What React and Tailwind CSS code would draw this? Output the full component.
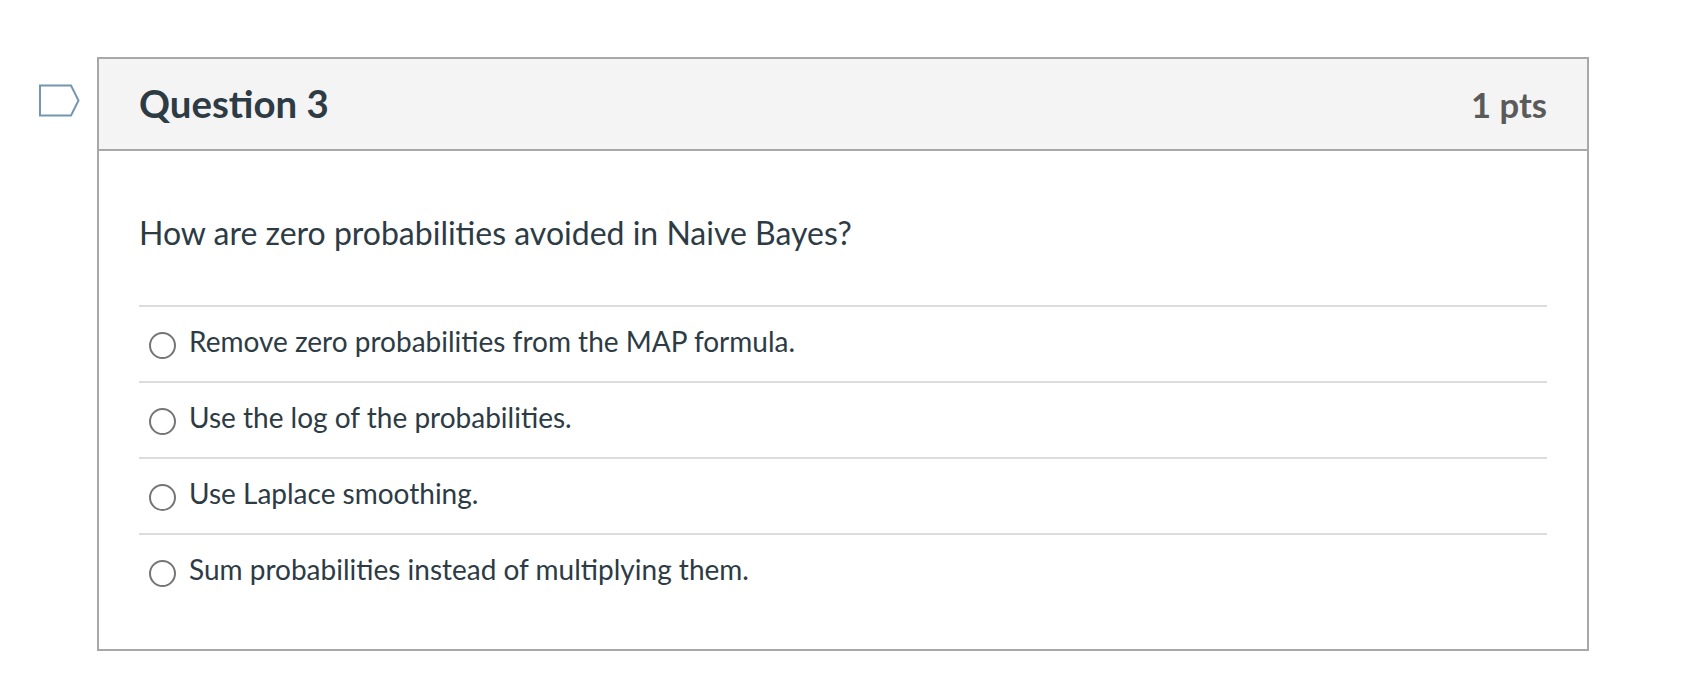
import React from 'react';

const answers = [
  'Remove zero probabilities from the MAP formula.',
  'Use the log of the probabilities.',
  'Use Laplace smoothing.',
  'Sum probabilities instead of multiplying them.',
];

export default function App() {
  return (
    <div className="h-[695px] bg-white pt-[57px] pl-[39px] flex items-start font-['Lato',sans-serif] text-[#2d3b45] overflow-hidden">
      <svg className="mt-[27px] mr-[17px] shrink-0" width="41" height="33" viewBox="0 0 41 33" fill="none">
        <path d="M1 1.5 H32 L39.5 16.5 L32 31.5 H1 Z" stroke="#7596b0" strokeWidth="2" />
      </svg>

      <div className="w-[1492px] h-[594px] border-2 border-[#a8a8a8]">
        <div className="h-[92px] bg-[#f4f4f4] border-b-2 border-[#a8a8a8] px-[40px] flex items-center justify-between">
          <h2 className="text-[38.4px] font-bold">Question 3</h2>
          <span className="text-[34.6px] font-bold text-[#5a5a5a] mt-[1px]">1 pts</span>
        </div>

        <div className="px-[40px] pt-[64px]">
          <p className="text-[32px] leading-[36px] mb-[54px]">How are zero probabilities avoided in Naive Bayes?</p>
          {answers.map((answer) => (
            <div key={answer} className="h-[76px] border-t-2 border-[#dcdcdc] flex items-center">
              <span className="w-[27px] h-[27px] ml-[10px] mr-[13px] mt-[2px] rounded-full border-2 border-[#757575] shrink-0" />
              <span className="text-[28px] mb-[6px]">{answer}</span>
            </div>
          ))}
        </div>
      </div>
    </div>
  );
}
